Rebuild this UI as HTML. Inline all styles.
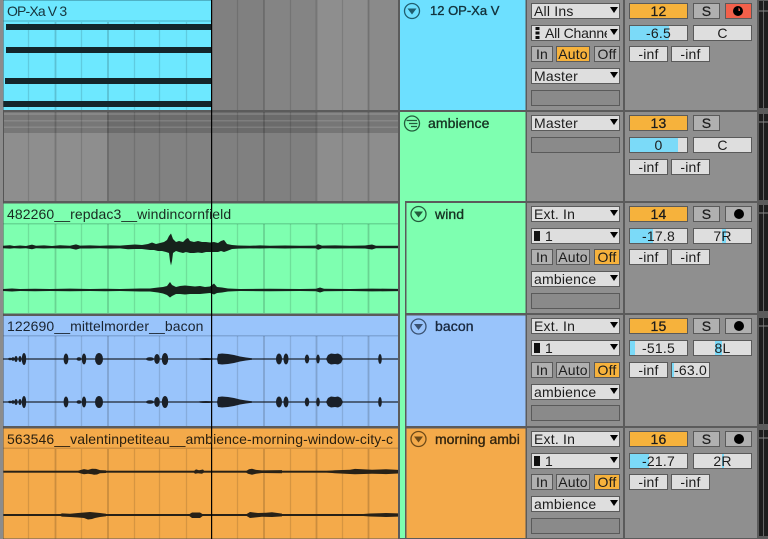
<!DOCTYPE html>
<html><head><meta charset="utf-8">
<style>
html,body{margin:0;padding:0;width:768px;height:539px;overflow:hidden;background:#5b5b5b}
*{box-sizing:border-box}
body{font-family:"Liberation Sans",sans-serif;color:#1c1c1c;position:relative}
#w{position:absolute;left:0;top:0;width:768px;height:539px;overflow:hidden;filter:blur(.35px)}
svg.bg{position:absolute;left:0;top:0}
.clipname{position:absolute;left:7px;font-size:14px;line-height:16px;letter-spacing:.1px;white-space:nowrap;color:#1a2a22}
.tr{position:absolute;left:527px;width:241px;height:112px}
.p{position:absolute;background:#8f8f8f;top:0;bottom:0}
.b{position:absolute;height:16px;border:1.5px solid #5a5a5a;background:#dedede;font-size:14px;line-height:14.5px;text-align:center;white-space:nowrap;overflow:hidden;letter-spacing:.2px}
.g{background:#b0b0b0}
.o{background:#f6b23c}
.e{background:#8a8a8a}
.dd{left:4px;width:89px;text-align:left;padding-left:2px;letter-spacing:.2px}
.dd:after{content:"";position:absolute;right:1px;top:3px;border-left:4.5px solid transparent;border-right:4.5px solid transparent;border-top:6px solid #000}
.r1{top:3px}.r2{top:25px}.r3{top:46px}.r4{top:68px}.r5{top:90px}
.in{left:4px;width:22px}.au{left:29px;width:34px}.of{left:67px;width:26px}
.num{left:102px;width:59px;-webkit-text-stroke:.25px #1c1c1c}.s{left:166px;width:27px;-webkit-text-stroke:.25px #1c1c1c}.rec{left:198px;width:27px}
.vol{left:102px;width:59px}.pan{left:166px;width:59px}
.i1{left:102px;width:39px}.i2{left:144px;width:39px}
.fill{position:absolute;top:0;bottom:0;background:#7bdaf8}
.t{position:relative}
.dot{position:absolute;left:7.500px;top:2px;width:10px;height:10px;border-radius:50%;background:#000}
.blk{position:absolute;left:2px;top:1.500px;width:6px;height:10px;background:#111}
.name{position:absolute;font-size:14px;line-height:16px;white-space:nowrap;-webkit-text-stroke:.35px currentColor;letter-spacing:.1px}
.clip{display:block;overflow:hidden;width:62px;letter-spacing:-.2px}
</style></head>
<body><div id="w">
<svg class="bg" width="768" height="539" viewBox="0 0 768 539">
<defs>
<g id="grid"><path d="M28.500 0V539M81.500 0V539M134.500 0V539M159.500 0V539M186.500 0V539M237.500 0V539M290.500 0V539M342.500 0V539" stroke="#000" stroke-opacity=".12" stroke-width="1.300" fill="none"/><path d="M55.500 0V539M108 0V539M264 0V539M316.500 0V539M368.500 0V539" stroke="#000" stroke-opacity=".17" stroke-width="1.800" fill="none"/></g>
<g id="bacon" fill="#1a2028">
<rect x="3" y="-.6" width="395" height="1.200"/>
<ellipse cx="10" cy="0" rx="1.800" ry="1.200"/><ellipse cx="13" cy="0" rx="1.600" ry="1.800"/><ellipse cx="16" cy="0" rx="1.600" ry="3"/><ellipse cx="20" cy="0" rx="1.600" ry="3"/><ellipse cx="24" cy="0" rx="2.200" ry="6"/>
<ellipse cx="66" cy="0" rx="2.400" ry="5.500"/><ellipse cx="79" cy="0" rx="2.500" ry="1.800"/><ellipse cx="84" cy="0" rx="2.200" ry="5.500"/>
<ellipse cx="99" cy="0" rx="4" ry="6"/>
<ellipse cx="150" cy="0" rx="4" ry="1.800"/><ellipse cx="157" cy="0" rx="2.800" ry="5"/><ellipse cx="165" cy="0" rx="3.200" ry="6"/>
<ellipse cx="206" cy="0" rx="8" ry="1"/>
<path d="M217 0 218-5 222-5.500 228-5 234-4 240-2.500 246-1.500 252-.7V.7L246 1.500 240 2.500 234 4 228 5 222 5.500 218 5Z"/>
<ellipse cx="279" cy="0" rx="3" ry="5.500"/><ellipse cx="286" cy="0" rx="2.500" ry="5.500"/><ellipse cx="307" cy="0" rx="2.200" ry="4.500"/><ellipse cx="318" cy="0" rx="1.800" ry="4.500"/>
<path d="M326 0 328-4 331-5.500 335-5 338-5.500 341-4 343 0 341 4 338 5.500 335 5 331 5.500 328 4Z"/>
<ellipse cx="380" cy="0" rx="1.800" ry="5"/>
</g>
</defs>
<rect width="768" height="539" fill="#5b5b5b"/>
<rect x="0" y="0" width="3" height="539" fill="#8c8c8c"/>
<rect x="3" y="0" width="1" height="539" fill="#555"/>

<!-- track 1 background -->
<rect x="211" y="0" width="53" height="110" fill="#808080"/>
<rect x="264" y="0" width="52" height="110" fill="#848484"/>
<rect x="316" y="0" width="52" height="110" fill="#8e8e8e"/>
<rect x="368" y="0" width="30" height="110" fill="#8a8a8a"/>
<!-- clip 1 -->
<rect x="3.500" y="0" width="208" height="110" fill="#6de8ff"/>
<rect x="3.500" y="0" width="208" height="1" fill="#4fb2c6"/>
<rect x="3.500" y="20" width="208" height="2" fill="#5ccbe0"/>
<svg x="3.500" y="22" width="208" height="88" viewBox="3.500 22 208 88"><use href="#grid"/></svg>
<rect x="6" y="24" width="205.500" height="6" fill="#14262b"/>
<rect x="6" y="47" width="205.500" height="6" fill="#14262b"/>
<rect x="5" y="78" width="206.500" height="6" fill="#14262b"/>
<rect x="3.500" y="101" width="208" height="6" fill="#14262b"/>
<svg x="212" y="0" width="186" height="110" viewBox="212 0 186 110"><use href="#grid"/></svg>

<!-- track 2 -->
<rect x="4" y="112" width="103" height="89" fill="#8e8e8e"/>
<rect x="107" y="112" width="105" height="89" fill="#818181"/>
<rect x="212" y="112" width="104" height="89" fill="#808080"/>
<rect x="316" y="112" width="82" height="89" fill="#8d8d8d"/>
<rect x="4" y="112" width="394" height="21" fill="#000" fill-opacity=".16"/>
<rect x="4" y="113" width="394" height="2" fill="#fff" fill-opacity=".13"/>
<rect x="4" y="120" width="394" height="1.500" fill="#fff" fill-opacity=".13"/>
<rect x="4" y="126.500" width="394" height="1.500" fill="#fff" fill-opacity=".13"/>
<svg x="4" y="112" width="394" height="89" viewBox="4 112 394 89"><use href="#grid"/></svg>

<!-- clip green -->
<rect x="3.500" y="203.500" width="394.500" height="110" fill="#7effb0"/>
<rect x="3.500" y="223" width="394.500" height="1.500" fill="#66d893"/>
<svg x="3.500" y="224" width="394.500" height="89" viewBox="3.500 224 394.500 89"><use href="#grid"/></svg>
<path transform="translate(0,247)" fill="#16221c" d="M3-1.200 10-1.700 14-1 20-1.500 26-1 32-2.400 36-1.200 44-1.600 52-1 60-1.700 70-1.200 76-2.600 80-1.400 90-1.600 100-1.200 110-1.600 120-1.400 128-2 135-2.500 142-2 148-3 152-4.500 156-3 160-4 164-5 167-7 169-11 171-13.500 173-8 176-5 179-6 183-5 186-8 188-9 190-6 194-5 198-6 202-5 206-5 210-4.500 214-5 218-4 221-6 224-7 227-3 232-2 238-1.500 250-1.200 260-1.600 270-1.200 285-1.500 300-1.200 316-1.400 318-2.800 322-1.400 335-1.600 350-1.200 365-1.500 372-2.500 376-1.300 398-1.300V1.300L376 1.300 372 2.500 365 1.500 350 1.400 335 1.500 322 1.400 318 2.800 316 1.400 300 1.300 285 1.500 270 1.300 260 1.500 250 1.400 238 1.600 232 2 227 4 224 5 221 4 218 5 214 5 210 5 206 5 202 6 198 5.500 194 6 190 6 186 5 183 6 179 5 176 4 173 6 172 14 171 18.500 170 14 169 6 166 5 162 4 158 4 154 3 150 3 142 2 135 2 128 2.200 120 1.400 110 1.600 100 1.300 90 1.500 80 1.500 76 2.600 70 1.400 60 1.500 52 1.300 44 1.500 36 1.300 32 2.300 26 1.200 20 1.500 14 1.200 10 1.600 3 1.200Z"/>
<path transform="translate(0,290)" fill="#16221c" d="M3-1 12-1.500 20-1 35-1.300 50-1 70-1.400 90-1 105-1.300 120-1 140-1.500 150-1.500 158-2.500 163-3 167-4 170-8 172-5 176-3 180-4 185-4.500 190-4 195-3.500 200-4 205-3 210-3.500 214-6.500 217-3 222-2.500 228-1.500 240-1 270-1.200 300-1 316-1.300 320-2.500 324-1.200 350-1 372-1.400 398-1.100V1.100L372 1.400 350 1 324 1.300 320 2.500 316 1.300 300 1 270 1.200 240 1 228 1.500 222 2.500 217 3 214 4.500 210 3 205 3.500 200 4 195 4 190 4 185 4.500 180 4 176 4 172 6 170 7.500 167 5 163 3.500 158 2.500 150 1.500 140 1.500 120 1 105 1.300 90 1 70 1.300 50 1 35 1.300 20 1 12 1.500 3 1Z"/>

<!-- clip blue -->
<rect x="3.500" y="316" width="394.500" height="110" fill="#99c4fb"/>
<rect x="3.500" y="335" width="394.500" height="1.500" fill="#7fa6d8"/>
<svg x="3.500" y="336" width="394.500" height="90" viewBox="3.500 336 394.500 90"><use href="#grid"/></svg>
<use href="#bacon" x="0" y="359"/>
<use href="#bacon" x="0" y="402"/>

<!-- clip orange -->
<rect x="3.500" y="428.500" width="394.500" height="110" fill="#f4aa4a"/>
<rect x="3.500" y="447.500" width="394.500" height="1.500" fill="#cf9040"/>
<svg x="3.500" y="449" width="394.500" height="89.500" viewBox="3.500 449 394.500 89.500"><use href="#grid"/></svg>
<g fill="#272117" transform="translate(0,471.700)">
<rect x="3.500" y="-1" width="394.500" height="2"/>
<path d="M76 0 80-1.600 84-2.600 88-1.800 92-3 96-2.800 100-1.600 106-1.300V1.300L100 1.600 97 2.800 94 3 92 2.500 88 2 84 2.500 80 1.600ZM193 0 196-2.300 199-1.500 203-2.200 205 0 202 2 198 1.600 195 2ZM245 0 249-2.500 252-3 256-1.800 262-1.300 282-1.600V1.600L262 1.300 256 2 252 3 248 2ZM318 0 335-1.500 350-2 355-2.800 372-2 386-2.400 398-1.800V1.800L386 2.400 372 2 355 2.500 335 1.600Z"/>
</g>
<g fill="#272117" transform="translate(0,515)">
<rect x="3.500" y="-1" width="394.500" height="2"/>
<path d="M58 0 62-1.600 70-1.300 78-2 84-2.500 90-3 95-2.500 100-2 106-1.200V1.200L100 2 95 3 92 4 88 4.500 84 3 78 2.500 70 2 62 1.600ZM188 0 192-2.500 200-2.500 204 0 200 3 192 3ZM245 0 250-3 258-2 266-2.200 272-2.800 282-1.400V1.400L272 2 262 1.800 250 3ZM350 0 370-1.500 386-2 398-1.600V1.600L386 2 370 1.500Z"/>
</g>

<!-- playhead -->
<rect x="211" y="0" width="1.200" height="539" fill="#000"/>

<!-- headers -->
<rect x="399" y="0" width="1" height="539" fill="#5b5b5b"/>
<rect x="400" y="0" width="125.500" height="110" fill="#6de0ff"/>
<rect x="400" y="112" width="125.500" height="427" fill="#7effb0"/>
<rect x="405" y="201" width="121" height="2" fill="#5b5b5b"/>
<rect x="405" y="201" width="1.500" height="338" fill="#5b5b5b"/>
<rect x="406.500" y="203" width="119" height="110" fill="#7effb0"/>
<rect x="406.500" y="313" width="119" height="2.500" fill="#5b5b5b"/>
<rect x="406.500" y="315.500" width="119" height="110.500" fill="#99c4fb"/>
<rect x="406.500" y="426" width="119" height="2.500" fill="#5b5b5b"/>
<rect x="406.500" y="428.500" width="119" height="109.500" fill="#f4aa4a"/>
<rect x="398" y="538" width="370" height="1" fill="#5b5b5b"/>

<!-- icons -->
<g fill="none" stroke="#1f5f70" stroke-width="1.300"><circle cx="412" cy="11" r="7.500"/></g>
<path d="M407.500 8.500H416.500L412 14.500Z" fill="#1f5f70"/>
<circle cx="412" cy="123.500" r="7.500" fill="none" stroke="#235c3c" stroke-width="1.300"/>
<path d="M406.500 120.500H417M409 123.500H417.500M411 126.500H417" stroke="#235c3c" stroke-width="1.200" fill="none"/>
<circle cx="418.500" cy="214" r="7.500" fill="none" stroke="#235c3c" stroke-width="1.300"/>
<path d="M414 211.500H423L418.500 217.500Z" fill="#235c3c"/>
<circle cx="418.500" cy="326.500" r="7.500" fill="none" stroke="#3a5272" stroke-width="1.300"/>
<path d="M414 324H423L418.500 330Z" fill="#3a5272"/>
<circle cx="418.500" cy="439" r="7.500" fill="none" stroke="#6e4a18" stroke-width="1.300"/>
<path d="M414 436.500H423L418.500 442.500Z" fill="#6e4a18"/>

<!-- meters -->
<g fill="#1e1e1e">
<rect x="759" y="1" width="9" height="107"/><rect x="759" y="114" width="9" height="86"/><rect x="759" y="205" width="9" height="106"/><rect x="759" y="318" width="9" height="106"/><rect x="759" y="430" width="9" height="106"/>
</g>
<path d="M763.500 1V108M763.500 114V200M763.500 205V311M763.500 318V424M763.500 430V536" stroke="#666" fill="none"/>
<path d="M759 11H768M759 122H768M759 213H768M759 326H768M759 438H768" stroke="#888" fill="none"/>
</svg>

<div class="clipname" style="top:3px;letter-spacing:-.85px;color:#17353d">OP-Xa V 3</div>
<div class="clipname" style="top:206px">482260__repdac3__windincornfield</div>
<div class="clipname" style="top:318px;color:#1a2430">122690__mittelmorder__bacon</div>
<div class="clipname" style="top:431px;width:391px;overflow:hidden;color:#2a2010">563546__valentinpetiteau__ambience-morning-window-city-c</div>

<div class="name" style="left:430px;top:3px;color:#13333d;font-size:13px;letter-spacing:0">12 OP-Xa V</div>
<div class="name" style="left:428px;top:115px;color:#163423">ambience</div>
<div class="name" style="left:435px;top:206px;color:#163423">wind</div>
<div class="name" style="left:435px;top:318px;color:#1a2a40">bacon</div>
<div class="name" style="left:435px;top:431px;color:#33250f;font-size:14px;letter-spacing:0">morning ambi</div>

<!-- Track 12 -->
<div class="tr" style="top:0;height:110px">
<div class="p" style="left:0;width:96px"></div><div class="p" style="left:98px;width:132px"></div>
<div class="b dd r1">All Ins</div>
<div class="b dd r2" style="padding-left:13px"><span class="clip">All Channe</span><svg style="position:absolute;left:3px;top:1px" width="5" height="12"><path d="M.5 0H4.500V3H.5ZM.5 4.500H4.500V7.500H.5ZM.5 9H4.500V12H.5Z" fill="#111"/></svg></div>
<div class="b g in r3">In</div><div class="b o au r3">Auto</div><div class="b g of r3">Off</div>
<div class="b dd r4">Master</div>
<div class="b e r5" style="left:4px;width:89px"></div>
<div class="b o num r1">12</div><div class="b g s r1">S</div>
<div class="b rec r1" style="background:#f2604a"><svg style="position:absolute;left:7px;top:2px" width="10" height="10"><circle cx="5" cy="5" r="5" fill="#000"/><path d="M5.500 1.500A3.500 3.500 0 0 1 7 5L5.500 5Z" fill="#f2604a"/></svg></div>
<div class="b vol r2"><div class="fill" style="left:0;width:39px"></div><span class="t">-6.5</span></div>
<div class="b pan r2">C</div>
<div class="b i1 r3">-inf</div><div class="b i2 r3">-inf</div>
</div>

<!-- Track 13 -->
<div class="tr" style="top:112px;height:89px">
<div class="p" style="left:0;width:96px"></div><div class="p" style="left:98px;width:132px"></div>
<div class="b dd r1">Master</div>
<div class="b e r2" style="left:4px;width:89px"></div>
<div class="b o num r1">13</div><div class="b g s r1">S</div>
<div class="b vol r2"><div class="fill" style="left:0;width:48px"></div><span class="t">0</span></div>
<div class="b pan r2">C</div>
<div class="b i1 r3" style="top:47px">-inf</div><div class="b i2 r3" style="top:47px">-inf</div>
</div>

<!-- Track 14 -->
<div class="tr" style="top:203px;height:110px">
<div class="p" style="left:0;width:96px"></div><div class="p" style="left:98px;width:132px"></div>
<div class="b dd r1">Ext. In</div>
<div class="b dd r2" style="padding-left:13px">1<span class="blk"></span></div>
<div class="b g in r3">In</div><div class="b g au r3">Auto</div><div class="b o of r3">Off</div>
<div class="b dd r4">ambience</div>
<div class="b e r5" style="left:4px;width:89px"></div>
<div class="b o num r1">14</div><div class="b g s r1">S</div>
<div class="b g rec r1"><span class="dot"></span></div>
<div class="b vol r2"><div class="fill" style="left:0;width:23px"></div><span class="t">-17.8</span></div>
<div class="b pan r2"><div class="fill" style="left:28px;width:4px"></div><span class="t">7R</span></div>
<div class="b i1 r3">-inf</div><div class="b i2 r3">-inf</div>
</div>

<!-- Track 15 -->
<div class="tr" style="top:315px;height:111px">
<div class="p" style="left:0;width:96px"></div><div class="p" style="left:98px;width:132px"></div>
<div class="b dd r1">Ext. In</div>
<div class="b dd r2" style="padding-left:13px">1<span class="blk"></span></div>
<div class="b g in r3" style="top:47px">In</div><div class="b g au r3" style="top:47px">Auto</div><div class="b o of r3" style="top:47px">Off</div>
<div class="b dd r4" style="top:69px">ambience</div>
<div class="b e r5" style="left:4px;width:89px;top:90px"></div>
<div class="b o num r1">15</div><div class="b g s r1">S</div>
<div class="b g rec r1"><span class="dot"></span></div>
<div class="b vol r2"><div class="fill" style="left:0;width:5px"></div><span class="t">-51.5</span></div>
<div class="b pan r2"><div class="fill" style="left:21px;width:7px"></div><span class="t">8L</span></div>
<div class="b i1 r3" style="top:47px">-inf</div><div class="b i2 r3" style="top:47px"><div class="fill" style="left:0;width:1.500px"></div><span class="t">-63.0</span></div>
</div>

<!-- Track 16 -->
<div class="tr" style="top:428px;height:110px">
<div class="p" style="left:0;width:96px"></div><div class="p" style="left:98px;width:132px"></div>
<div class="b dd r1">Ext. In</div>
<div class="b dd r2" style="padding-left:13px">1<span class="blk"></span></div>
<div class="b g in r3">In</div><div class="b g au r3">Auto</div><div class="b o of r3">Off</div>
<div class="b dd r4">ambience</div>
<div class="b e r5" style="left:4px;width:89px"></div>
<div class="b o num r1">16</div><div class="b g s r1">S</div>
<div class="b g rec r1"><span class="dot"></span></div>
<div class="b vol r2"><div class="fill" style="left:0;width:19px"></div><span class="t">-21.7</span></div>
<div class="b pan r2"><div class="fill" style="left:28px;width:2px"></div><span class="t">2R</span></div>
<div class="b i1 r3">-inf</div><div class="b i2 r3">-inf</div>
</div>
</div></body></html>
